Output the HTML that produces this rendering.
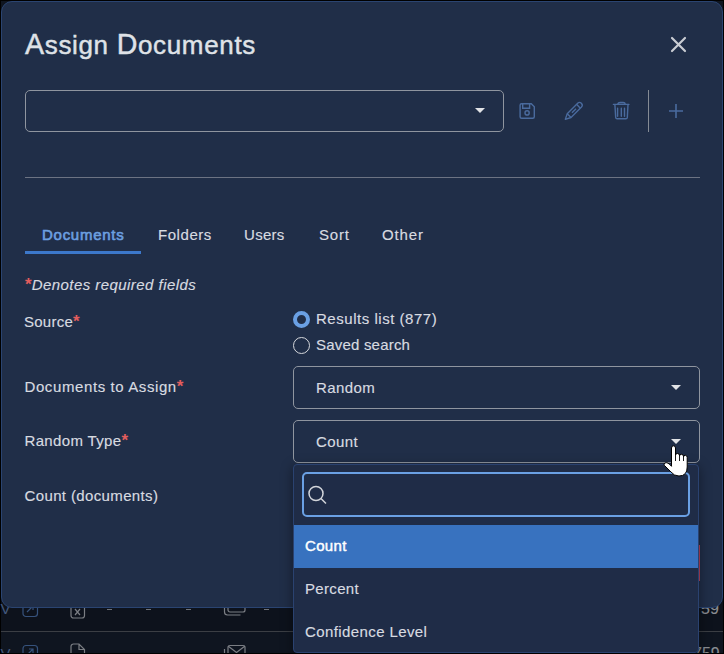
<!DOCTYPE html>
<html><head><meta charset="utf-8">
<style>
*{margin:0;padding:0;box-sizing:border-box}
html,body{width:724px;height:654px;overflow:hidden;background:#000;font-family:"Liberation Sans",sans-serif}
.abs{position:absolute}
#bg{position:absolute;left:1px;top:1px;width:722px;height:652px;background:#0f1520}
#dlg{position:absolute;left:1px;top:1px;width:722px;height:607px;background:#202e48;border:1px solid #2a4471;border-radius:11px}
.t{position:absolute;white-space:nowrap;color:#d8dbe0;font-size:15px;line-height:15px;letter-spacing:0.45px;-webkit-text-stroke:0.15px currentColor}
.req{color:#e35d5d;letter-spacing:0;font-size:17px;font-weight:bold;font-style:normal;-webkit-text-stroke:0}
.sel{position:absolute;border:1px solid #8f959f;border-radius:5px}
.arrow{position:absolute;width:0;height:0;border-left:5px solid transparent;border-right:5px solid transparent;border-top:5.5px solid #e1e3e6}
.dash{position:absolute;height:1.3px;width:5px;background:#6f7278;top:609px}
</style></head><body>
<div id="bg"></div>
<!-- background table -->
<div class="abs" style="left:1px;top:600px;width:722px;height:31px;background:#0d121c"></div><div class="abs" style="left:1px;top:631px;width:722px;height:1px;background:#3b3e44"></div>
<div class="t" style="left:0.5px;top:601px;color:#43597c;font-size:15px;letter-spacing:0;-webkit-text-stroke:0">V</div>
<div class="t" style="left:0.5px;top:646px;color:#43597c;font-size:15px;letter-spacing:0;-webkit-text-stroke:0">V</div>
<svg class="abs" style="left:22px;top:600px" width="17" height="18" viewBox="0 0 17 18" fill="none" stroke="#36527c" stroke-width="1.2">
<rect x="1" y="2" width="14.5" height="14.5" rx="3"/><path d="M5 12L11 6M7 6h4v4"/></svg>
<svg class="abs" style="left:22px;top:644px" width="17" height="18" viewBox="0 0 17 18" fill="none" stroke="#36527c" stroke-width="1.2">
<rect x="1" y="1.5" width="14.5" height="14.5" rx="3"/><path d="M5 11L11 5M7 5h4v4"/></svg>
<svg class="abs" style="left:70px;top:600px" width="16" height="19" viewBox="0 0 16 19" fill="none" stroke="#7b7e84" stroke-width="1.2">
<rect x="1" y="1" width="13.5" height="17" rx="2.5"/><path d="M5 9l5 6M10 9l-5 6"/></svg>
<svg class="abs" style="left:70px;top:643px" width="16" height="12" viewBox="0 0 16 12" fill="none" stroke="#7b7e84" stroke-width="1.2">
<path d="M1 12V3.5a2.5 2.5 0 0 1 2.5-2.5H9l5.5 5.5V12M9 1v5.5h5.5"/></svg>
<div class="dash" style="left:107px"></div>
<div class="dash" style="left:146px"></div>
<div class="dash" style="left:186px"></div>
<div class="dash" style="left:264px"></div>
<svg class="abs" style="left:223px;top:598px" width="24" height="20" viewBox="0 0 24 20" fill="none" stroke="#7b7e84" stroke-width="1.2">
<rect x="5" y="1" width="17" height="13" rx="2"/><path d="M1.5 6v8a3 3 0 0 0 3 3h13"/></svg>
<svg class="abs" style="left:223px;top:644px" width="24" height="12" viewBox="0 0 24 12" fill="none" stroke="#7b7e84" stroke-width="1.2">
<rect x="5" y="1.5" width="17" height="13" rx="2"/><path d="M5 2l8.5 6.5L22 2M1.5 5v8"/></svg>
<div class="t" style="left:701px;top:601px;color:#8a8d92;font-size:16px;line-height:16px;letter-spacing:0">59</div>
<div class="t" style="left:693px;top:646px;color:#8a8d92;font-size:16px;line-height:16px;letter-spacing:0">759</div>
<div class="abs" style="left:723px;top:0;width:1px;height:654px;background:#000"></div>
<div class="abs" style="left:0;top:653px;width:724px;height:1px;background:#000"></div>

<div id="dlg"></div>

<!-- title -->
<div class="t" style="left:25px;top:30px;font-size:26px;line-height:28px;color:#dfe2e7;letter-spacing:0.66px;-webkit-text-stroke:0.45px #dfe2e7"><span style="font-size:28.6px">A</span>ssign <span style="font-size:28.6px">D</span>ocuments</div>
<!-- close -->
<svg class="abs" style="left:668px;top:34px" width="20" height="20" viewBox="0 0 20 20"><path d="M4 4L17 17M17 4L4 17" stroke="#c9ccd3" stroke-width="2.2" stroke-linecap="round"/></svg>

<!-- top select -->
<div class="sel" style="left:25px;top:90px;width:479px;height:42px"></div>
<div class="arrow" style="left:475px;top:108px"></div>

<!-- toolbar icons -->
<svg class="abs" style="left:514px;top:98px" width="26" height="26" viewBox="0 0 26 26" fill="none" stroke="#4a6b9e" stroke-width="1.4">
<path d="M7.6 5.7H17.3L20.3 8.7V18.7Q20.3 20.2 18.8 20.2H7.6Q6.1 20.2 6.1 18.7V7.2Q6.1 5.7 7.6 5.7Z"/><path d="M8.7 5.7V10.2H15.6V5.7"/><circle cx="13.1" cy="14.9" r="2.1"/></svg>
<svg class="abs" style="left:560px;top:98px" width="28" height="26" viewBox="0 0 28 26" fill="none" stroke="#4a6b9e" stroke-width="1.35" stroke-linejoin="round">
<g transform="translate(5.3 21.4) rotate(-45)"><path d="M0 0L5.4 -2.7H20.2Q22.7 -2.7 22.7 0Q22.7 2.7 20.2 2.7H5.4Z"/><path d="M5.4 -2.7V2.7M18.6 -2.7V2.7M9.4 0H15.2"/></g></svg>
<svg class="abs" style="left:611px;top:101px" width="20" height="20" viewBox="0 0 20 20" fill="none" stroke="#4a6b9e" stroke-width="1.4" stroke-linejoin="round" stroke-linecap="round">
<path d="M2.4 3.4H17.9M6.6 3.3Q7.2 1.5 9 1.5H12.2Q14 1.5 14.4 3.3M3.9 3.6L4.7 16.6Q4.9 17.8 6.1 17.8H14.9Q16.1 17.8 16.3 16.6L17 3.6M6.6 7.2V15.2M10.3 7.2V15.2M13.5 7.2V15.2"/></svg>
<div class="abs" style="left:648px;top:90px;width:1px;height:42px;background:#858b95"></div>
<svg class="abs" style="left:666px;top:101px" width="20" height="20" viewBox="0 0 20 20" fill="none" stroke="#4a6b9e" stroke-width="1.6">
<path d="M10 3v14M3 10h14"/></svg>

<!-- hr -->
<div class="abs" style="left:25px;top:177px;width:675px;height:1px;background:#6c7383"></div>

<!-- tabs -->
<div class="t" style="left:42px;top:227px;color:#6c9fe0;letter-spacing:0.73px;-webkit-text-stroke:0.6px #6c9fe0">Documents</div>
<div class="abs" style="left:25px;top:251px;width:116px;height:3px;background:#3c78cb"></div>
<div class="t" style="left:158px;top:227px;letter-spacing:0.55px">Folders</div>
<div class="t" style="left:244px;top:227px;letter-spacing:0.3px">Users</div>
<div class="t" style="left:319px;top:227px;letter-spacing:0.8px">Sort</div>
<div class="t" style="left:382px;top:227px;letter-spacing:0.85px">Other</div>

<div class="t" style="left:25px;top:277px;font-style:italic"><span class="req">*</span>Denotes required fields</div>

<div class="t" style="left:24px;top:313.5px;letter-spacing:0.25px">Source<span class="req">*</span></div>
<!-- radios -->
<div class="abs" style="left:293px;top:311px;width:17px;height:17px;border-radius:50%;border:4.3px solid #6aa0e4"></div>
<div class="t" style="left:316px;top:311px;letter-spacing:0.53px">Results list (877)</div>
<div class="abs" style="left:293px;top:337px;width:17px;height:17px;border-radius:50%;border:1.6px solid #d6d8dc"></div>
<div class="t" style="left:316px;top:337px;letter-spacing:0.2px">Saved search</div>

<div class="t" style="left:24.5px;top:379px;letter-spacing:0.6px">Documents to Assign<span class="req">*</span></div>
<div class="sel" style="left:293px;top:366px;width:407px;height:43px"></div>
<div class="t" style="left:316px;top:380px;letter-spacing:0.4px">Random</div>
<div class="arrow" style="left:671px;top:385px"></div>

<div class="t" style="left:24.5px;top:433px;letter-spacing:0.35px">Random Type<span class="req">*</span></div>
<div class="sel" style="left:293px;top:420px;width:407px;height:43px"></div>
<div class="t" style="left:316px;top:434px;letter-spacing:0.4px">Count</div>
<div class="arrow" style="left:671px;top:439px"></div>

<div class="t" style="left:24.5px;top:488px;letter-spacing:0.37px">Count (documents)</div>

<!-- red edge of something behind panel -->
<div class="abs" style="left:699px;top:545px;width:1px;height:36px;background:#b2415a"></div>

<!-- dropdown panel -->
<div class="abs" style="left:293px;top:464px;width:406px;height:189px;background:#1f2c47;border:1px solid #2a4270;border-radius:4px;box-shadow:0 3px 12px 1px rgba(0,0,0,.35)"></div>
<div class="abs" style="left:302px;top:472px;width:388px;height:45px;border:2px solid #6aa0e4;border-radius:5px"></div>
<svg class="abs" style="left:304px;top:482px" width="26" height="26" viewBox="0 0 26 26" fill="none" stroke="#d2d5da" stroke-width="1.5">
<circle cx="12" cy="11.5" r="7"/><path d="M17 16.5l5 5"/></svg>
<div class="abs" style="left:294px;top:525px;width:404px;height:43px;background:#3872bf"></div>
<div class="t" style="left:305px;top:537.5px;color:#fff;letter-spacing:0.35px;-webkit-text-stroke:0.45px #fff">Count</div>
<div class="t" style="left:305px;top:580.5px;letter-spacing:0.33px">Percent</div>
<div class="t" style="left:305px;top:624px;letter-spacing:0.4px">Confidence Level</div>

<!-- hand cursor -->
<svg class="abs" style="left:662px;top:444px" width="28" height="34" viewBox="0 0 28 34">
<path d="M9.5 4Q9.5 1.8 11.5 1.8Q13.5 1.8 13.5 4L13.5 11Q13.5 9.5 15.5 9.5Q17.5 9.5 17.5 11.5L17.5 12Q17.5 10.3 19.5 10.3Q21.5 10.3 21.5 12.5L21.5 13Q21.5 11.3 23.3 11.3Q25.2 11.3 25.2 13.5L25.2 23Q25.2 32 17 32Q12 32 9 28L2.5 21.5Q1.3 20 2.8 19Q4.8 18 7 19.8L9.5 22.3Z" fill="#fff" stroke="#000" stroke-width="1"/><path d="M13.5 11V17M17.5 12V17M21.5 13V17" stroke="#000" stroke-width="0.9"/>
</svg>
</body></html>
